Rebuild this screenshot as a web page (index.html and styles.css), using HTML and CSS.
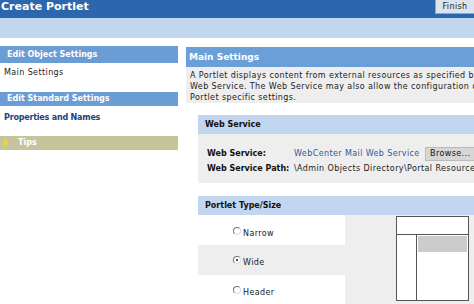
FILE: index.html
```html
<!DOCTYPE html>
<html lang="en">
<head>
  <meta charset="UTF-8" />
  <title>Create Portlet</title>
  <link rel="stylesheet" href="styles.css">
</head>
<body>
  <div class="topbar">
    <h1>Create Portlet</h1>
    <button class="finish">Finish</button>
  </div>
  <div class="subbar"></div>

  <div class="main">
    <div class="sidebar">
      <div class="side-head">Edit Object Settings</div>
      <div class="side-item">Main Settings</div>
      <div class="side-head second">Edit Standard Settings</div>
      <div class="side-item link">Properties and Names</div>
      <div class="tips"><span class="arrow"></span>Tips</div>
    </div>

    <div class="content">
      <div class="content-head">Main Settings</div>
      <p class="desc">A Portlet displays content from external resources as specified by the<br>
        Web Service. The Web Service may also allow the configuration of<br>
        Portlet specific settings.</p>

      <div class="panel">
        <div class="panel-head">Web Service</div>
        <div class="panel-body">
          <div class="field">
            <span class="label">Web Service:</span>
            <span class="svc">WebCenter Mail Web Service</span>
            <button class="browse">Browse...</button>
          </div>
          <div class="field">
            <span class="label">Web Service Path:</span>
            <span class="path">\Admin Objects Directory\Portal Resources</span>
          </div>
        </div>
      </div>

      <div class="panel">
        <div class="panel-head">Portlet Type/Size</div>
        <div class="type-grid">
          <div class="options">
            <div class="opt"><span class="radio"></span><span>Narrow</span></div>
            <div class="opt alt"><span class="radio on"></span><span>Wide</span></div>
            <div class="opt"><span class="radio"></span><span>Header</span></div>
          </div>
          <div class="preview">
            <div class="layout">
              <div class="l-top"></div>
              <div class="l-left"></div>
              <div class="l-right"><div class="l-block"></div></div>
            </div>
          </div>
        </div>
      </div>
    </div>
  </div>
</body>
</html>
```

FILE: styles.css
```css
* {
  margin: 0;
  padding: 0;
  box-sizing: border-box;
}

body {
  width: 474px;
  height: 304px;
  overflow: hidden;
  background: #fff;
  font-family: "DejaVu Sans", Verdana, sans-serif;
  font-size: 8px;
  letter-spacing: 0.4px;
  color: #222;
}

.topbar {
  height: 18px;
  background: #2c66ad;
  display: flex;
  justify-content: space-between;
  align-items: flex-start;
}

.topbar h1 {
  color: #fff;
  font-size: 11px;
  font-weight: bold;
  letter-spacing: 0;
  line-height: 14px;
  padding-left: 1px;
}

.finish {
  width: 39px;
  height: 14px;
  background: #dde4ee;
  border: none;
  border-left: 1px solid #8fa6c6;
  border-bottom: 1px solid #8fa6c6;
  font-family: inherit;
  font-size: 8px;
  letter-spacing: 0.4px;
  color: #222;
}

.subbar {
  height: 20px;
  background: #c3d6ef;
}

.main {
  display: flex;
  gap: 8px;
  margin-top: 8px;
  overflow: hidden;
}

.sidebar {
  width: 178px;
  flex-shrink: 0;
}

.side-head {
  height: 17px;
  line-height: 17px;
  padding-left: 7px;
  background: #6a9dd6;
  color: #fff;
  font-weight: bold;
  letter-spacing: 0;
}

.side-head.second {
  height: 14px;
  line-height: 14px;
}

.side-item {
  height: 29px;
  padding: 5px 0 0 4px;
}

.side-item.link {
  height: 30px;
  padding-top: 7px;
  color: #23417e;
  font-weight: bold;
  letter-spacing: -0.2px;
}

.tips {
  height: 14px;
  line-height: 14px;
  background: #c5c59c;
  color: #fff;
  font-weight: bold;
  letter-spacing: 0;
  display: flex;
  align-items: center;
}

.arrow {
  width: 0;
  height: 0;
  margin: 0 9px 0 4px;
  border-left: 5px solid #f3d13a;
  border-top: 4px solid transparent;
  border-bottom: 4px solid transparent;
}

.content {
  width: 320px;
  flex-shrink: 0;
}

.content-head {
  height: 20px;
  line-height: 20px;
  padding-left: 3px;
  background: #6a9fd8;
  color: #fff;
  font-weight: bold;
  font-size: 9px;
  letter-spacing: 0;
  margin-top: 1px;
}

.desc {
  background: #eeeeee;
  height: 36px;
  padding: 3px 4px;
  line-height: 11px;
  white-space: nowrap;
}

.panel {
  margin: 12px 0 0 12px;
}

.panel + .panel {
  margin-top: 13px;
}

.panel-head {
  height: 19px;
  line-height: 19px;
  padding-left: 7px;
  background: #c3d6ef;
  font-weight: bold;
  letter-spacing: 0;
  color: #111;
}

.panel-body {
  background: #eeeeee;
  height: 49px;
  padding: 12px 0 0 9px;
}

.field {
  display: flex;
  align-items: center;
  height: 15px;
  white-space: nowrap;
}

.label {
  font-weight: bold;
  letter-spacing: 0;
  color: #111;
  width: 87px;
}

.svc {
  color: #2d5aa0;
  width: 131px;
}

.browse {
  height: 14px;
  width: 50px;
  background: #d6d6d6;
  border: 1px solid #bbb;
  font-family: inherit;
  font-size: 8px;
  letter-spacing: 0.4px;
  color: #111;
  text-align: left;
  padding-left: 4px;
}

.type-grid {
  display: flex;
  height: 90px;
}

.options {
  width: 147px;
  background: #fff;
}

.opt {
  height: 30px;
  padding: 11px 0 0 35px;
  display: flex;
  align-items: flex-start;
  gap: 2px;
  line-height: 9px;
  color: #222;
}

.opt span + span {
  margin-top: 2px;
}

.opt:first-child {
  padding-top: 12px;
}

.opt.alt {
  background: #eeeeee;
}

.radio {
  width: 8px;
  height: 8px;
  border-radius: 50%;
  border: 1px solid #777;
  border-right-color: #ddd;
  border-bottom-color: #ddd;
  background: #fff;
  position: relative;
}

.radio.on::after {
  content: "";
  position: absolute;
  left: 2px;
  top: 2px;
  width: 2px;
  height: 2px;
  border-radius: 50%;
  background: #111;
}

.preview {
  flex: 1;
  background: #eeeeee;
  padding: 1px 0 0 51px;
}

.layout {
  width: 73px;
  height: 85px;
  border: 1px solid #555;
  background: #fff;
  display: grid;
  grid-template-columns: 20px 1fr;
  grid-template-rows: 18px 1fr;
}

.l-top {
  grid-column: 1 / 3;
  border-bottom: 1px solid #555;
}

.l-left {
  border-right: 1px solid #555;
}

.l-right {
  padding: 1px 1px 0 1px;
}

.l-block {
  height: 16px;
  background: #cccccc;
}
```
